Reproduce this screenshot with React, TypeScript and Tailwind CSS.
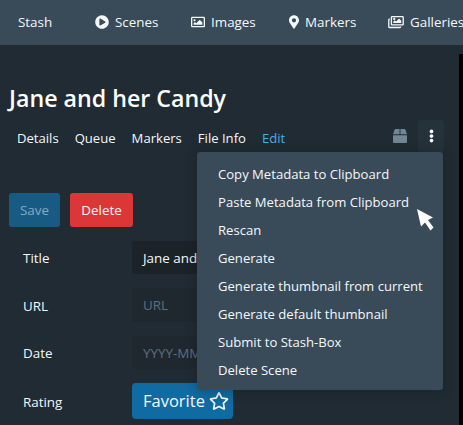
import React from "react";

const font = { fontFamily: '"Open Sans", "Noto Sans", sans-serif' };

function Play() {
  return (
    <svg viewBox="0 0 512 512" className="w-[14px] h-[14px]" fill="currentColor">
      <path d="M256 8C119 8 8 119 8 256s111 248 248 248 248-111 248-248S393 8 256 8zm115.7 272l-176 101c-15.8 8.800-35.700-2.500-35.700-21V152c0-18.400 19.800-29.800 35.700-21l176 107c16.400 9.200 16.400 32.900 0 42z" />
    </svg>
  );
}
function ImageIcon() {
  return (
    <svg viewBox="0 0 512 512" className="w-[14px] h-[14px]" fill="currentColor">
      <path d="M464 64H48C21.490 64 0 85.490 0 112v288c0 26.510 21.490 48 48 48h416c26.510 0 48-21.490 48-48V112c0-26.510-21.490-48-48-48zm-6 336H54a6 6 0 0 1-6-6V118a6 6 0 0 1 6-6h404a6 6 0 0 1 6 6v276a6 6 0 0 1-6 6zM128 152c-22.091 0-40 17.909-40 40s17.909 40 40 40 40-17.909 40-40-17.909-40-40-40zM96 352h320v-80l-87.515-87.515c-4.686-4.686-12.284-4.686-16.971 0L192 304l-39.515-39.515c-4.686-4.686-12.284-4.686-16.971 0L96 304v48z" />
    </svg>
  );
}
function Pin() {
  return (
    <svg viewBox="0 0 384 512" className="w-[10px] h-[14px]" fill="currentColor">
      <path d="M172.268 501.670C26.970 291.031 0 260.016 0 192 0 85.961 85.961 0 192 0s192 85.961 192 192c0 68.016-26.970 99.031-172.268 309.670-9.535 13.774-29.930 13.773-39.464 0zM192 272c44.183 0 80-35.817 80-80s-35.817-80-80-80-80 35.817-80 80 35.817 80 80 80z" />
    </svg>
  );
}
function Gallery() {
  return (
    <svg viewBox="0 0 576 512" className="w-[16px] h-[14px]" fill="currentColor">
      <path d="M480 416v16c0 26.510-21.490 48-48 48H48c-26.510 0-48-21.490-48-48V176c0-26.510 21.490-48 48-48h16v48H54a6 6 0 0 0-6 6v244a6 6 0 0 0 6 6h372a6 6 0 0 0 6-6v-10h48zm42-336H150a6 6 0 0 0-6 6v244a6 6 0 0 0 6 6h372a6 6 0 0 0 6-6V86a6 6 0 0 0-6-6zm6-48c26.510 0 48 21.490 48 48v256c0 26.510-21.490 48-48 48H144c-26.510 0-48-21.490-48-48V80c0-26.510 21.490-48 48-48h384zM264 144c0 22.091-17.909 40-40 40s-40-17.909-40-40 17.909-40 40-40 40 17.909 40 40zm-72 96l39.515-39.515c4.686-4.686 12.284-4.686 16.971 0L288 240l103.515-103.515c4.686-4.686 12.284-4.686 16.971 0L480 208v80H192v-48z" />
    </svg>
  );
}
function Box() {
  return (
    <svg viewBox="0 0 512 512" className="w-[14px] h-[14px]" fill="currentColor">
      <path d="M509.500 184.600L458.900 32.800C452.400 13.200 434.100 0 413.400 0H272v192h238.700c-.4-2.500-.4-5-1.200-7.400zM240 0H98.600c-20.700 0-39 13.200-45.500 32.800L2.500 184.600c-.8 2.400-.8 4.900-1.200 7.400H240V0zM0 224v240c0 26.500 21.500 48 48 48h416c26.500 0 48-21.500 48-48V224H0z" />
    </svg>
  );
}
function Dots() {
  return (
    <svg viewBox="0 0 192 512" className="w-[5px] h-[14px]" fill="currentColor">
      <path d="M96 184c39.800 0 72 32.200 72 72s-32.200 72-72 72-72-32.200-72-72 32.200-72 72-72zM24 80c0 39.800 32.200 72 72 72s72-32.200 72-72S135.800 8 96 8 24 40.200 24 80zm0 352c0 39.800 32.200 72 72 72s72-32.200 72-72-32.200-72-72-72-72 32.200-72 72z" />
    </svg>
  );
}
function Star() {
  return (
    <svg viewBox="0 0 576 512" className="w-[20px] h-[18px] shrink-0" fill="currentColor">
      <path d="M528.100 171.500L382 150.200 316.700 17.800c-11.700-23.600-45.600-23.900-57.400 0L194 150.200 47.900 171.500c-26.200 3.800-36.700 36.100-17.700 54.600l105.700 103-25 145.500c-4.500 26.300 23.200 46 46.400 33.700L288 439.600l130.700 68.700c23.200 12.200 50.900-7.400 46.400-33.700l-25-145.500 105.700-103c19-18.500 8.500-50.800-17.700-54.600zM388.600 312.300l23.700 138.400L288 385.400l-124.300 65.300 23.700-138.400-100.600-98 139-20.200 62.200-126 62.200 126 139 20.200-100.600 98z" />
    </svg>
  );
}

const navItems = [
  { label: "Scenes", icon: <Play />, w: "w-[96px]" },
  { label: "Images", icon: <ImageIcon />, w: "w-[98px]" },
  { label: "Markers", icon: <Pin />, w: "w-[99px]" },
  { label: "Galleries", icon: <Gallery />, w: "w-[90px]" },
];

const tabs = ["Details", "Queue", "Markers", "File Info"];

const menu = [
  "Copy Metadata to Clipboard",
  "Paste Metadata from Clipboard",
  "Rescan",
  "Generate",
  "Generate thumbnail from current",
  "Generate default thumbnail",
  "Submit to Stash-Box",
  "Delete Scene",
];

function Row({ label, children }: { label: string; children: React.ReactNode }) {
  return (
    <div className="flex items-center">
      <div className="w-[123px] shrink-0 pl-[14px] pt-[2px] text-[#f5f8fa]">{label}</div>
      {children}
    </div>
  );
}

export default function App() {
  return (
    <div style={font} className="relative w-[463px] h-[425px] overflow-hidden bg-[#202b33] text-[13.4px] text-[#f5f8fa]">
      <nav className="h-[45px] bg-[#394b59] flex items-center whitespace-nowrap pl-[18px] overflow-hidden">
        <span className="w-[77px] shrink-0">Stash</span>
        {navItems.map((n) => (
          <div key={n.label} className={`flex items-center gap-[6px] shrink-0 ${n.w}`}>
            {n.icon}
            <span>{n.label}</span>
          </div>
        ))}
      </nav>

      <h1 className="ml-[9px] mt-[36px] text-[23.2px] leading-[34px] font-semibold text-white whitespace-nowrap">
        Jane and her Candy
      </h1>

      <div className="mt-[5px] pl-[17px] pt-[6px] h-[32px] flex items-center relative">
        <div className="flex items-center gap-[16px] text-[13.1px]">
          {tabs.map((t) => (
            <span key={t}>{t}</span>
          ))}
          <span className="text-[#48aff0]">Edit</span>
        </div>
        <div className="absolute left-[393px] top-[9px] text-[#738694]">
          <Box />
        </div>
        <div className="absolute left-[418px] top-[0px] w-[26px] h-[32px] bg-[#26323a] rounded-[3px] flex items-center justify-center">
          <Dots />
        </div>
      </div>

      <div className="mt-[41px] ml-[9px] flex gap-[10px]">
        <button className="w-[51px] h-[34px] pt-[1px] rounded-[3px] bg-[#137cbd]/60 text-[#f5f8fa]/50">Save</button>
        <button className="w-[63px] h-[34px] pt-[1px] rounded-[3px] bg-[#db3737] text-[#f5f8fa]">Delete</button>
      </div>

      <div className="mt-[14px] ml-[9px] flex flex-col gap-[14px]">
        <Row label="Title">
          <div className="w-[240px] h-[33px] pt-[1px] rounded-[3px] bg-[#1b2329] px-[11px] flex items-center whitespace-nowrap overflow-hidden">
            Jane and her Candy
          </div>
        </Row>
        <Row label="URL">
          <div className="w-[240px] h-[34px] pt-[1px] rounded-[3px] bg-[#1f282e] px-[11px] flex items-center text-[#5c7080]">URL</div>
        </Row>
        <Row label="Date">
          <div className="w-[240px] h-[33px] pt-[1px] rounded-[3px] bg-[#1f282e] px-[11px] flex items-center text-[#5c7080]">YYYY-MM-DD</div>
        </Row>
        <Row label="Rating">
          <button className="w-[101px] h-[36px] shrink-0 rounded-[4px] bg-[#106ba3] pl-[11px] flex items-center gap-[4px] text-[16.5px] text-[#f5f8fa]">
            Favorite <Star />
          </button>
        </Row>
      </div>

      <div className="absolute left-[197px] top-[152px] w-[246px] h-[238px] rounded-[3px] bg-[#394b59] pt-[9px] flex flex-col shadow-[0_0_12px_rgba(16,22,26,0.4)]">
        {menu.map((m) => (
          <div key={m} className="h-[28px] pl-[21px] flex items-center whitespace-nowrap text-[13.1px]">
            {m}
          </div>
        ))}
      </div>

      <div className="absolute left-[459px] top-[54px] w-[4px] h-[371px] bg-black" />

      <svg viewBox="0 0 18 23" className="absolute left-[417px] top-[209px] w-[18px] h-[23px]">
        <path d="M0 0 L4 17.500 L8 13.500 L13.500 21.500 L16.500 18.500 L11 11 L16 8.500 Z" fill="#fff" />
      </svg>
    </div>
  );
}
